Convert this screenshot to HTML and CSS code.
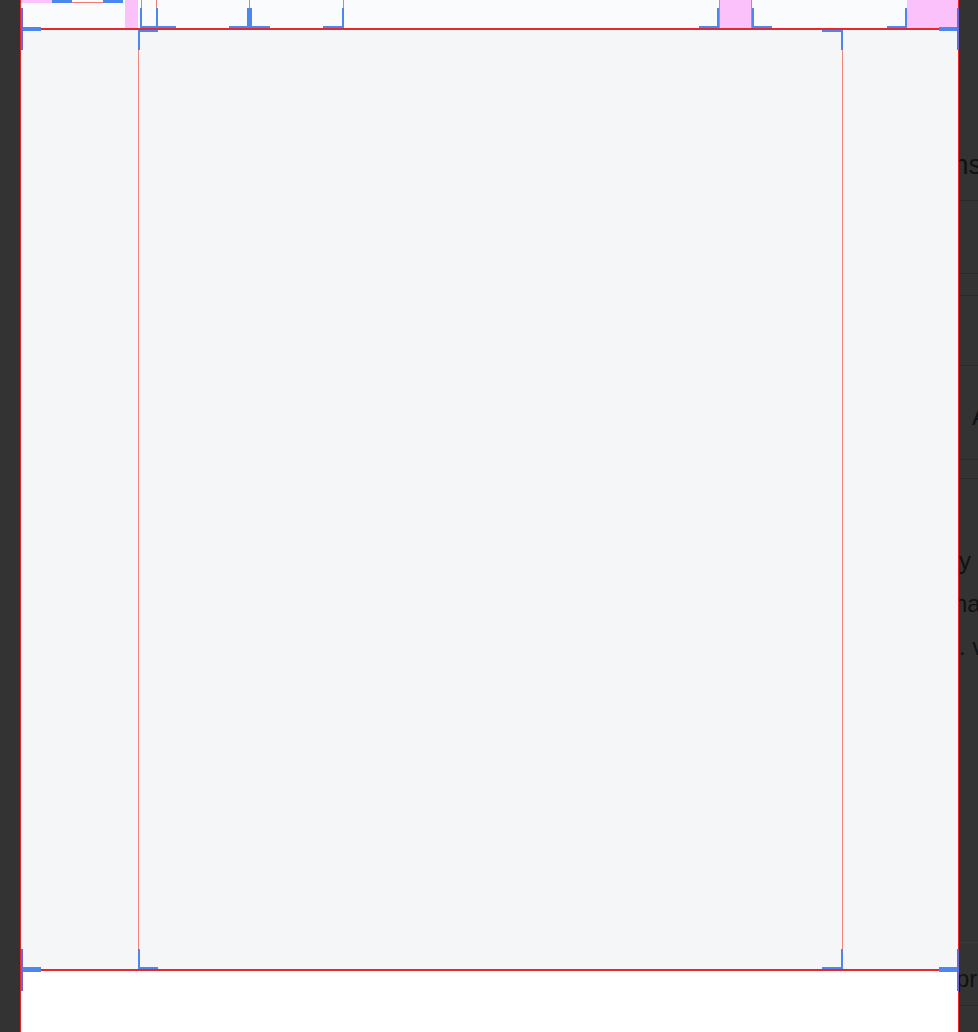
FILE: index.html
```html
<!DOCTYPE html>
<html lang="en">
<head>
<meta charset="utf-8">
<title>Layout guides</title>
<link rel="stylesheet" href="styles.css">
</head>
<body>
<div class="page">
  <div class="side side-left"></div>
  <div class="center">
    <div class="topbar"></div>
    <div class="canvas">
      <div class="gutter gutter-left"></div>
      <div class="frame"></div>
      <div class="gutter gutter-right"></div>
    </div>
    <div class="below"></div>
  </div>
  <div class="side side-right">
    <div class="row r1"><span class="t-head">ns</span></div>
    <div class="row r2"></div>
    <div class="row r3"></div>
    <div class="row r4"></div>
    <div class="row r5"><span class="t-a">A</span></div>
    <div class="row r6"></div>
    <div class="row r7">
      <span class="t-line t-y">y</span>
      <span class="t-line t-na">na</span>
      <span class="t-line t-dv">. v</span>
    </div>
    <div class="row r8"><span class="t-pr">pr</span></div>
  </div>
</div>

<div class="guides">
  <!-- top bar markers -->
  <div class="g pink" style="left:21px;top:0;width:31px;height:3px"></div>
  <div class="g blue" style="left:52px;top:0;width:20px;height:3px"></div>
  <div class="g blue" style="left:103px;top:0;width:20px;height:3px"></div>
  <div class="g salmon" style="left:72px;top:2px;width:31px;height:1px"></div>
  <div class="g pink" style="left:125px;top:0;width:13px;height:28px"></div>

  <div class="g salmon" style="left:141px;top:0;width:1px;height:28px"></div>
  <div class="g salmon" style="left:156px;top:0;width:1px;height:28px"></div>
  <div class="g blue" style="left:140px;top:8px;width:2px;height:20px"></div>
  <div class="g blue" style="left:156px;top:8px;width:2px;height:20px"></div>
  <div class="g blue" style="left:140px;top:26px;width:36px;height:2px"></div>

  <div class="g salmon" style="left:249px;top:0;width:1px;height:28px"></div>
  <div class="g blue" style="left:247px;top:8px;width:5px;height:20px"></div>
  <div class="g blue" style="left:229px;top:26px;width:41px;height:2px"></div>

  <div class="g salmon" style="left:343px;top:0;width:1px;height:28px"></div>
  <div class="g blue" style="left:342px;top:8px;width:2px;height:20px"></div>
  <div class="g blue" style="left:323px;top:26px;width:20px;height:2px"></div>

  <div class="g pink" style="left:719px;top:0;width:33px;height:28px"></div>
  <div class="g salmon" style="left:719px;top:0;width:1px;height:28px"></div>
  <div class="g salmon" style="left:751px;top:0;width:1px;height:28px"></div>
  <div class="g blue" style="left:717px;top:8px;width:2px;height:20px"></div>
  <div class="g blue" style="left:752px;top:8px;width:2px;height:20px"></div>
  <div class="g blue" style="left:699px;top:26px;width:20px;height:2px"></div>
  <div class="g blue" style="left:752px;top:26px;width:20px;height:2px"></div>

  <div class="g pink" style="left:907px;top:0;width:51px;height:28px"></div>
  <div class="g blue" style="left:905px;top:8px;width:2px;height:20px"></div>
  <div class="g blue" style="left:887px;top:26px;width:20px;height:2px"></div>

  <!-- outer corners top -->
  <div class="g blue" style="left:21px;top:27px;width:20px;height:4px"></div>
  <div class="g purple" style="left:21px;top:8px;width:2px;height:42px"></div>
  <div class="g blue" style="left:939px;top:27px;width:19px;height:4px"></div>
  <div class="g purple" style="left:957px;top:8px;width:2px;height:42px"></div>

  <!-- frame corners top -->
  <div class="g blue" style="left:138px;top:30px;width:2px;height:20px"></div>
  <div class="g blue" style="left:138px;top:30px;width:20px;height:2px"></div>
  <div class="g blue" style="left:822px;top:30px;width:20px;height:2px"></div>
  <div class="g blue" style="left:841px;top:30px;width:2px;height:20px"></div>

  <!-- bottom -->
  <div class="g blue" style="left:21px;top:967px;width:20px;height:5px"></div>
  <div class="g purple" style="left:21px;top:949px;width:2px;height:42px"></div>
  <div class="g blue" style="left:138px;top:949px;width:2px;height:20px"></div>
  <div class="g blue" style="left:138px;top:967px;width:20px;height:2px"></div>
  <div class="g blue" style="left:822px;top:967px;width:20px;height:2px"></div>
  <div class="g blue" style="left:841px;top:949px;width:2px;height:20px"></div>
  <div class="g blue" style="left:939px;top:967px;width:19px;height:5px"></div>
  <div class="g purple" style="left:957px;top:949px;width:2px;height:42px"></div>
</div>
</body>
</html>
```

FILE: styles.css
```css
* { box-sizing: border-box; }
html, body { margin: 0; padding: 0; }
body {
  width: 978px;
  height: 1032px;
  overflow: hidden;
  background: #ffffff;
  font-family: "Liberation Sans", Arial, sans-serif;
  position: relative;
}
.page {
  display: flex;
  height: 1032px;
}
.side {
  background: #333333;
  flex: none;
}
.side-left { width: 20px; }
.side-right {
  width: 19px;
  overflow: hidden;
  display: flex;
  flex-direction: column;
  color: #111111;
  white-space: nowrap;
}
.center {
  width: 939px;
  flex: none;
  border-left: 1px solid #e8262c;
  border-right: 1px solid #e8262c;
  display: flex;
  flex-direction: column;
  background: #ffffff;
}
.topbar {
  height: 30px;
  background: #fafbfd;
  border-bottom: 2px solid #e8262c;
  flex: none;
}
.canvas {
  height: 941px;
  flex: none;
  display: flex;
  background: #f5f6f8;
  border-bottom: 2px solid #e8262c;
}
.gutter-left { width: 117px; flex: none; }
.frame {
  width: 705px;
  flex: none;
  border-left: 1px solid #f3857b;
  border-right: 1px solid #f3857b;
}
.gutter-right { flex: 1; }
.below { flex: 1; background: #ffffff; }

.row {
  flex: none;
  border-bottom: 1px solid #2a2a2a;
}
.r1 { height: 201px; padding-top: 151px; }
.r2 { height: 73px; }
.r3 { height: 22px; }
.r4 { height: 70px; }
.r5 { height: 94px; padding-top: 38px; }
.r6 { height: 19px; }
.r7 { height: 464px; padding-top: 60px; display: flex; flex-direction: column; border-bottom-color: #3a3a3a; }
.r8 { height: 63px; padding-top: 24px; border-bottom-color: #2a2a2a; }

.t-head {
  display: block;
  font-size: 28px;
  line-height: 28px;
  margin-left: -6px;
}
.t-a {
  display: block;
  font-size: 25px;
  line-height: 25px;
  margin-left: 13px;
}
.t-line {
  display: block;
  font-size: 24px;
  line-height: 43px;
}
.t-y { margin-left: 0; }
.t-na { margin-left: -5px; }
.t-dv { margin-left: 0; }
.t-pr {
  display: block;
  font-size: 24px;
  line-height: 24px;
  margin-left: -3px;
}

.guides {
  position: absolute;
  left: 0;
  top: 0;
  width: 978px;
  height: 1032px;
  pointer-events: none;
}
.g { position: absolute; }
.blue { background: #4c87f0; }
.pink { background: #fbc1fb; }
.salmon { background: #f07a70; }
.purple { background: #6f66d4; }
```
